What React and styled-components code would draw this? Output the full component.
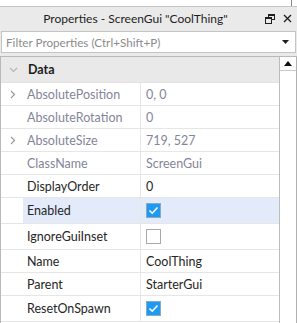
import React from 'react';
import styled, { createGlobalStyle } from 'styled-components';

const GlobalStyle = createGlobalStyle`
  html, body {
    margin: 0;
    padding: 0;
    background: #ffffff;
  }
  body {
    font-family: Lato, 'Liberation Sans', sans-serif;
    font-size: 12.5px;
    color: #262626;
  }
`;

const Panel = styled.div`
  width: 297px;
  height: 323px;
  display: flex;
  flex-direction: column;
  overflow: hidden;
  background: #eaeaea;
`;

const TopStrip = styled.div`
  height: 6px;
  background: #ffffff;
  border-bottom: 1px solid #c6c6c6;
  display: flex;
  justify-content: flex-end;
  .tick {
    width: 1px;
    background: #8a8a8a;
    margin-right: 5px;
  }
`;

const Header = styled.div`
  height: 23px;
  display: flex;
  align-items: center;
  .title {
    flex: 1;
    text-align: center;
    color: #1e1e1e;
    font-size: 12px;
    padding-left: 6px;
  }
  .icons {
    display: flex;
    align-items: center;
    gap: 8px;
    padding-right: 5px;
  }
  svg {
    display: block;
  }
`;

const FilterBar = styled.div`
  padding: 1px 1px 3px 1px;
`;

const FilterBox = styled.div`
  height: 20px;
  background: #ffffff;
  border: 1px solid #c4c4c4;
  display: flex;
  align-items: center;
  justify-content: space-between;
  padding: 0 6px 0 4px;
  color: #8c8c8c;
  font-size: 11.7px;
`;

const Grid = styled.div`
  flex: 1;
  display: flex;
  background: #ffffff;
  border-top: 1px solid #b9b9b9;
  border-left: 1px solid #b9b9b9;
`;

const Rows = styled.div`
  width: 278px;
  display: flex;
  flex-direction: column;
`;

const CategoryRow = styled.div`
  height: 25px;
  background: #e9e9e9;
  border-bottom: 1px solid #e2e2e2;
  display: flex;
  align-items: center;
  gap: 10px;
  padding-left: 8px;
  font-weight: 700;
  color: #1c1c1c;
`;

const PropRow = styled.div`
  height: ${p => (p.$tall ? 25 : 22)}px;
  display: flex;
  border-bottom: 1px solid #e6e6e6;
`;

const NameCell = styled.div`
  width: 139px;
  display: flex;
  align-items: center;
  border-right: 1px solid #e6e6e6;
  .arrow {
    width: 22px;
    display: flex;
    justify-content: center;
  }
  .label {
    flex: 1;
    height: 100%;
    display: flex;
    align-items: center;
    padding-left: 4px;
    color: ${p => (p.$readonly ? '#85859a' : '#262626')};
    background: ${p => (p.$selected ? '#e3ebfa' : 'transparent')};
  }
`;

const ValueCell = styled.div`
  flex: 1;
  display: flex;
  align-items: center;
  padding-left: 5px;
  color: ${p => (p.$readonly ? '#85859a' : '#262626')};
  background: ${p => (p.$selected ? '#e3ebfa' : 'transparent')};
`;

const Box = styled.span`
  width: 13px;
  height: 13px;
  border: 1px solid ${p => (p.$checked ? '#8aa9c6' : '#a9a9a9')};
  background: ${p => (p.$checked ? '#1e9af2' : '#ffffff')};
  display: flex;
  align-items: center;
  justify-content: center;
`;

const Scrollbar = styled.div`
  width: 16px;
  border-left: 1px solid #bcbcbc;
  border-right: 1px solid #b0b0b0;
  background: #ffffff;
  .up {
    height: 13px;
    border-bottom: 1px solid #c8c8c8;
    display: flex;
    align-items: center;
    justify-content: center;
  }
`;

const Chevron = ({ down }) => (
  <svg width="9" height="9" viewBox="0 0 9 9">
    {down ? (
      <polyline points="1,3 4.5,6.5 8,3" fill="none" stroke="#b4b4b4" strokeWidth="1.2" />
    ) : (
      <polyline points="3,1 6.5,4.5 3,8" fill="none" stroke="#9a9a9a" strokeWidth="1.2" />
    )}
  </svg>
);

const Check = ({ checked }) => (
  <Box $checked={checked}>
    {checked && (
      <svg width="11" height="9" viewBox="0 0 11 9">
        <polyline points="1.5,4.5 4.2,7.2 9.5,1.5" fill="none" stroke="#ffffff" strokeWidth="1.6" />
      </svg>
    )}
  </Box>
);

const props = [
  { name: 'AbsolutePosition', value: '0, 0', readonly: true, expand: true },
  { name: 'AbsoluteRotation', value: '0', readonly: true },
  { name: 'AbsoluteSize', value: '719, 527', readonly: true, expand: true },
  { name: 'ClassName', value: 'ScreenGui', readonly: true },
  { name: 'DisplayOrder', value: '0' },
  { name: 'Enabled', check: true, checked: true, selected: true },
  { name: 'IgnoreGuiInset', check: true, checked: false },
  { name: 'Name', value: 'CoolThing' },
  { name: 'Parent', value: 'StarterGui' },
  { name: 'ResetOnSpawn', check: true, checked: true },
];

export default function App() {
  return (
    <>
      <GlobalStyle />
      <Panel>
        <TopStrip>
          <div className="tick" />
        </TopStrip>
        <Header>
          <span className="title">Properties - ScreenGui "CoolThing"</span>
          <span className="icons">
            <svg width="10" height="10" viewBox="0 0 10 10">
              <rect x="3.5" y="0.5" width="6" height="5" fill="none" stroke="#1e1e1e" />
              <rect x="3" y="0" width="7" height="2" fill="#1e1e1e" />
              <rect x="0.5" y="3.5" width="6" height="6" fill="#eaeaea" stroke="#1e1e1e" />
              <rect x="0" y="3" width="7" height="2" fill="#1e1e1e" />
            </svg>
            <svg width="9" height="9" viewBox="0 0 9 9">
              <path d="M1 1 L8 8 M8 1 L1 8" stroke="#1e1e1e" strokeWidth="1.3" />
            </svg>
          </span>
        </Header>
        <FilterBar>
          <FilterBox>
            <span>Filter Properties (Ctrl+Shift+P)</span>
            <svg width="7" height="4" viewBox="0 0 7 4">
              <polygon points="0,0 7,0 3.5,4" fill="#1e1e1e" />
            </svg>
          </FilterBox>
        </FilterBar>
        <Grid>
          <Rows>
            <CategoryRow>
              <Chevron down />
              <span>Data</span>
            </CategoryRow>
            {props.map(p => (
              <PropRow key={p.name} $tall={p.check}>
                <NameCell $readonly={p.readonly} $selected={p.selected}>
                  <span className="arrow">{p.expand && <Chevron />}</span>
                  <span className="label">{p.name}</span>
                </NameCell>
                <ValueCell $readonly={p.readonly} $selected={p.selected}>
                  {p.check ? <Check checked={p.checked} /> : p.value}
                </ValueCell>
              </PropRow>
            ))}
          </Rows>
          <Scrollbar>
            <div className="up">
              <svg width="8" height="5" viewBox="0 0 8 5">
                <polygon points="0,5 8,5 4,0" fill="#111111" />
              </svg>
            </div>
          </Scrollbar>
        </Grid>
      </Panel>
    </>
  );
}
